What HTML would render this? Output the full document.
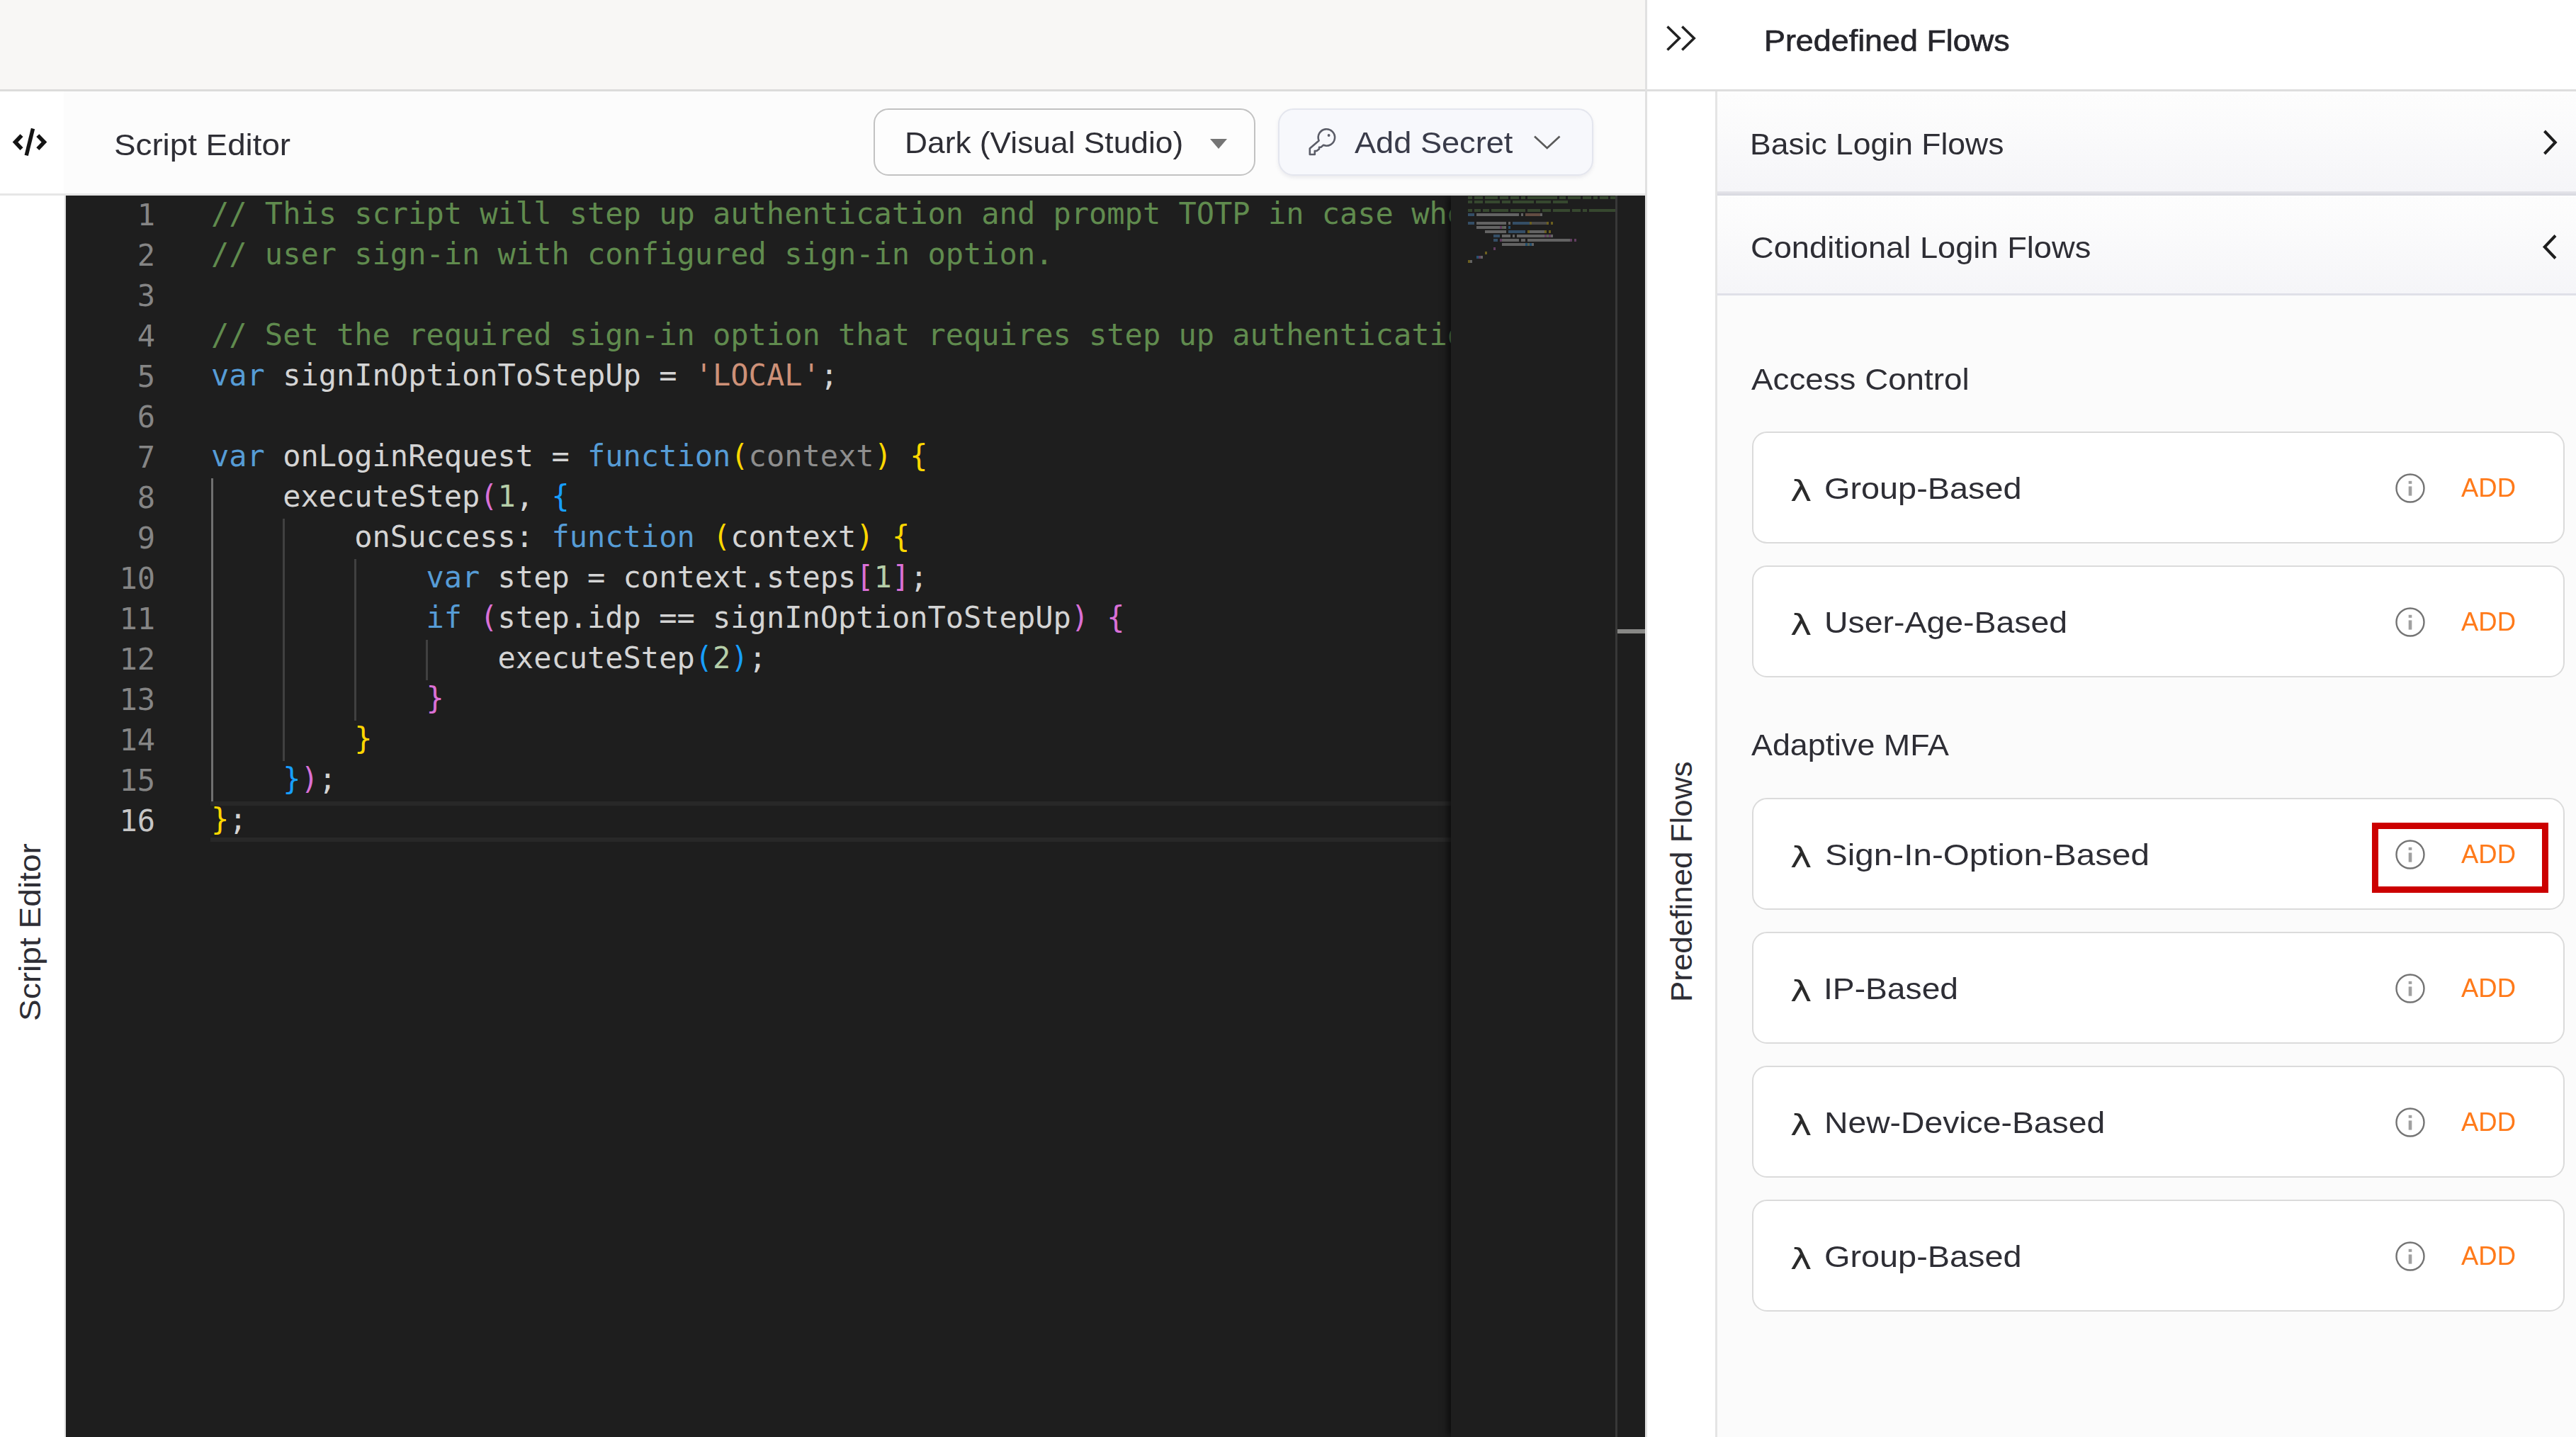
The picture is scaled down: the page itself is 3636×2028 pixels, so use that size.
<!DOCTYPE html>
<html lang="en">
<head>
<meta charset="utf-8">
<title>Script Editor - Predefined Flows</title>
<style>
*{box-sizing:border-box;margin:0;padding:0}
html,body{width:3636px;height:2028px;overflow:hidden;background:#fff}
body{position:relative;font-family:"Liberation Sans",sans-serif;font-size:42px;color:#2a2a2e;line-height:1}
.abs{position:absolute}
.t{position:absolute;white-space:nowrap;line-height:48px;height:48px}
/* left panel */
#ltop{left:0;top:0;width:2322px;height:126px;background:#f8f7f5}
#ltopb{left:0;top:126px;width:2322px;height:3px;background:#dcdcdb}
#lhead-l{left:0;top:129px;width:90px;height:145px;background:#fff}
#lhead-r{left:90px;top:129px;width:2232px;height:145px;background:#fcfcfc}
#lheadb{left:0;top:273px;width:2322px;height:3px;background:#e6e6e6}
#lside{left:0;top:276px;width:90px;height:1752px;background:#fff}
#lsideb{left:90px;top:276px;width:4px;height:1752px;background:linear-gradient(90deg,#fff,#bdbdbd)}
#editor{left:93px;top:276px;width:2229px;height:1752px;background:#1e1e1e;overflow:hidden;font-family:"DejaVu Sans Mono","Liberation Mono",monospace;font-size:42px;color:#d4d4d4}
#vsep{left:2322px;top:0;width:3px;height:2028px;background:#e1e1e1}
/* right panel */
#rhead{left:2325px;top:0;width:1311px;height:126px;background:#fff}
#rheadb{left:2325px;top:126px;width:1311px;height:3px;background:#dedede}
#rtab{left:2325px;top:129px;width:96px;height:1899px;background:#fff}
#rtabb{left:2421px;top:129px;width:3px;height:1899px;background:#e5e5e5}
#rcont{left:2424px;top:129px;width:1212px;height:1899px;background:#fbfbfb}

.hd{color:#2e2e35}
#dd{left:1233px;top:153px;width:539px;height:95px;border:2px solid #c2c2c2;border-radius:21px;background:#fdfdfd}
#btn{left:1804px;top:153px;width:445px;height:95px;border:2px solid #e4e6ee;border-radius:22px;background:#f7f8fc;box-shadow:0 3px 5px rgba(120,125,150,.13)}
#tri{left:1708px;top:196px;width:0;height:0;border-left:12.5px solid transparent;border-right:12.5px solid transparent;border-top:14px solid #757575}
.acc{left:0;width:1212px;background:linear-gradient(180deg,#fdfdfd 0%,#fafafb 45%,#f5f5f8 100%)}
.card{position:absolute;left:49px;width:1147px;height:158px;border:2px solid #dbdbdb;border-radius:21px;background:#fff}
.card .lam{position:absolute;left:52px;top:58px;font-size:40px;line-height:48px;transform-origin:0 50%;transform:scaleX(1.28);color:#2b2b2b;font-family:"DejaVu Sans","Liberation Sans",sans-serif}
.card .nm{position:absolute;left:101px;top:55px;line-height:48px;white-space:nowrap;color:#2e2e35}
.card .add{position:absolute;left:999px;top:57px;font-size:36px;line-height:42px;color:#ff7a1a;white-space:nowrap;transform-origin:0 50%;transform:scaleX(1.013)}
.card svg{position:absolute;left:903px;top:54px}
.sec{position:absolute;left:48px;line-height:48px;white-space:nowrap;color:#2e2e35}

#editor .ln{position:absolute;left:0;width:126px;margin-top:-0.7px;text-align:right;height:57px;line-height:57px;color:#858585;white-space:pre}
#editor .cl{position:absolute;left:205px;margin-top:-3px;height:57px;line-height:57px;white-space:pre;color:#d4d4d4}
#code{position:absolute;left:0;top:0;width:1955px;height:1752px;overflow:hidden}
.c{color:#608b4e}.k{color:#569cd6}.s{color:#ce9178}.n{color:#b5cea8}.b1{color:#ffd700}.b2{color:#da70d6}.b3{color:#179fff}.u{color:#8e8e8e}
.ig{position:absolute;width:3px;background:#404040}
#mm{position:absolute;left:1955px;top:0;width:325px;height:1752px;background:#1e1e1e;box-shadow:-7px 0 9px -2px rgba(0,0,0,.55)}
#mm i{position:absolute;height:4px;display:block;opacity:.5;filter:blur(.6px)}
</style>
</head>
<body>
<!-- LEFT -->
<div class="abs" id="ltop"></div>
<div class="abs" id="ltopb"></div>
<div class="abs" id="lhead-l"></div>
<div class="abs" id="lhead-r"></div>
<div class="abs" id="lheadb"></div>
<div class="abs" id="lside"></div>
<div class="abs" id="lsideb"></div>
<div class="abs" id="editor"><div id="code">
<div class="abs" style="left:204px;top:855px;width:1760px;height:57px;border-top:6px solid #282828;border-bottom:6px solid #282828"></div>
<div class="ln" style="top:0px">1</div>
<div class="cl" style="top:0px"><span class="c">// This script will step up authentication and prompt TOTP in case when the</span></div>
<div class="ln" style="top:57px">2</div>
<div class="cl" style="top:57px"><span class="c">// user sign-in with configured sign-in option.</span></div>
<div class="ln" style="top:114px">3</div>
<div class="cl" style="top:114px"></div>
<div class="ln" style="top:171px">4</div>
<div class="cl" style="top:171px"><span class="c">// Set the required sign-in option that requires step up authentication.</span></div>
<div class="ln" style="top:228px">5</div>
<div class="cl" style="top:228px"><span class="k">var</span> signInOptionToStepUp = <span class="s">&#x27;LOCAL&#x27;</span>;</div>
<div class="ln" style="top:285px">6</div>
<div class="cl" style="top:285px"></div>
<div class="ln" style="top:342px">7</div>
<div class="cl" style="top:342px"><span class="k">var</span> onLoginRequest = <span class="k">function</span><span class="b1">(</span><span class="u">context</span><span class="b1">)</span> <span class="b1">{</span></div>
<div class="ln" style="top:399px">8</div>
<div class="cl" style="top:399px">    executeStep<span class="b2">(</span><span class="n">1</span>, <span class="b3">{</span></div>
<div class="ln" style="top:456px">9</div>
<div class="cl" style="top:456px">        onSuccess: <span class="k">function</span> <span class="b1">(</span>context<span class="b1">)</span> <span class="b1">{</span></div>
<div class="ln" style="top:513px">10</div>
<div class="cl" style="top:513px">            <span class="k">var</span> step = context.steps<span class="b2">[</span><span class="n">1</span><span class="b2">]</span>;</div>
<div class="ln" style="top:570px">11</div>
<div class="cl" style="top:570px">            <span class="k">if</span> <span class="b2">(</span>step.idp == signInOptionToStepUp<span class="b2">)</span> <span class="b2">{</span></div>
<div class="ln" style="top:627px">12</div>
<div class="cl" style="top:627px">                executeStep<span class="b3">(</span><span class="n">2</span><span class="b3">)</span>;</div>
<div class="ln" style="top:684px">13</div>
<div class="cl" style="top:684px">            <span class="b2">}</span></div>
<div class="ln" style="top:741px">14</div>
<div class="cl" style="top:741px">        <span class="b1">}</span></div>
<div class="ln" style="top:798px">15</div>
<div class="cl" style="top:798px">    <span class="b3">}</span><span class="b2">)</span>;</div>
<div class="ln" style="top:855px;color:#c6c6c6">16</div>
<div class="cl" style="top:855px"><span class="b1">}</span>;</div>
<div class="ig" style="left:205.0px;top:399px;height:456px;background:#707070"></div>
<div class="ig" style="left:306.1px;top:456px;height:342px"></div>
<div class="ig" style="left:407.3px;top:513px;height:228px"></div>
<div class="ig" style="left:508.4px;top:627px;height:57px"></div>
</div>
<div id="mm">
<i style="left:24px;top:1px;width:6px;background:#4f7340"></i>
<i style="left:33px;top:1px;width:12px;background:#4f7340"></i>
<i style="left:48px;top:1px;width:18px;background:#4f7340"></i>
<i style="left:69px;top:1px;width:12px;background:#4f7340"></i>
<i style="left:84px;top:1px;width:12px;background:#4f7340"></i>
<i style="left:99px;top:1px;width:6px;background:#4f7340"></i>
<i style="left:108px;top:1px;width:42px;background:#4f7340"></i>
<i style="left:153px;top:1px;width:9px;background:#4f7340"></i>
<i style="left:165px;top:1px;width:18px;background:#4f7340"></i>
<i style="left:186px;top:1px;width:12px;background:#4f7340"></i>
<i style="left:201px;top:1px;width:6px;background:#4f7340"></i>
<i style="left:210px;top:1px;width:12px;background:#4f7340"></i>
<i style="left:225px;top:1px;width:7px;background:#4f7340"></i>
<i style="left:24px;top:7px;width:6px;background:#4f7340"></i>
<i style="left:33px;top:7px;width:12px;background:#4f7340"></i>
<i style="left:48px;top:7px;width:21px;background:#4f7340"></i>
<i style="left:72px;top:7px;width:12px;background:#4f7340"></i>
<i style="left:87px;top:7px;width:30px;background:#4f7340"></i>
<i style="left:120px;top:7px;width:21px;background:#4f7340"></i>
<i style="left:144px;top:7px;width:21px;background:#4f7340"></i>
<i style="left:24px;top:19px;width:6px;background:#4f7340"></i>
<i style="left:33px;top:19px;width:9px;background:#4f7340"></i>
<i style="left:45px;top:19px;width:9px;background:#4f7340"></i>
<i style="left:57px;top:19px;width:24px;background:#4f7340"></i>
<i style="left:84px;top:19px;width:21px;background:#4f7340"></i>
<i style="left:108px;top:19px;width:18px;background:#4f7340"></i>
<i style="left:129px;top:19px;width:12px;background:#4f7340"></i>
<i style="left:144px;top:19px;width:24px;background:#4f7340"></i>
<i style="left:171px;top:19px;width:12px;background:#4f7340"></i>
<i style="left:186px;top:19px;width:6px;background:#4f7340"></i>
<i style="left:195px;top:19px;width:37px;background:#4f7340"></i>
<i style="left:24px;top:25px;width:9px;background:#4a7fae"></i>
<i style="left:36px;top:25px;width:60px;background:#a8a8a8"></i>
<i style="left:99px;top:25px;width:3px;background:#a8a8a8"></i>
<i style="left:105px;top:25px;width:21px;background:#a67a66"></i>
<i style="left:126px;top:25px;width:3px;background:#a8a8a8"></i>
<i style="left:24px;top:37px;width:9px;background:#4a7fae"></i>
<i style="left:36px;top:37px;width:42px;background:#a8a8a8"></i>
<i style="left:81px;top:37px;width:3px;background:#a8a8a8"></i>
<i style="left:87px;top:37px;width:24px;background:#4a7fae"></i>
<i style="left:111px;top:37px;width:3px;background:#b8a020"></i>
<i style="left:114px;top:37px;width:21px;background:#777"></i>
<i style="left:135px;top:37px;width:3px;background:#b8a020"></i>
<i style="left:141px;top:37px;width:3px;background:#b8a020"></i>
<i style="left:36px;top:43px;width:33px;background:#a8a8a8"></i>
<i style="left:69px;top:43px;width:3px;background:#a45fa2"></i>
<i style="left:72px;top:43px;width:3px;background:#93a689"></i>
<i style="left:75px;top:43px;width:3px;background:#a8a8a8"></i>
<i style="left:81px;top:43px;width:3px;background:#2a82c4"></i>
<i style="left:48px;top:49px;width:30px;background:#a8a8a8"></i>
<i style="left:81px;top:49px;width:24px;background:#4a7fae"></i>
<i style="left:108px;top:49px;width:3px;background:#b8a020"></i>
<i style="left:111px;top:49px;width:21px;background:#a8a8a8"></i>
<i style="left:132px;top:49px;width:3px;background:#b8a020"></i>
<i style="left:138px;top:49px;width:3px;background:#b8a020"></i>
<i style="left:60px;top:55px;width:9px;background:#4a7fae"></i>
<i style="left:72px;top:55px;width:12px;background:#a8a8a8"></i>
<i style="left:87px;top:55px;width:3px;background:#a8a8a8"></i>
<i style="left:93px;top:55px;width:39px;background:#a8a8a8"></i>
<i style="left:132px;top:55px;width:3px;background:#a45fa2"></i>
<i style="left:135px;top:55px;width:3px;background:#93a689"></i>
<i style="left:138px;top:55px;width:3px;background:#a45fa2"></i>
<i style="left:141px;top:55px;width:3px;background:#a8a8a8"></i>
<i style="left:60px;top:61px;width:6px;background:#4a7fae"></i>
<i style="left:69px;top:61px;width:3px;background:#a45fa2"></i>
<i style="left:72px;top:61px;width:24px;background:#a8a8a8"></i>
<i style="left:99px;top:61px;width:6px;background:#a8a8a8"></i>
<i style="left:108px;top:61px;width:60px;background:#a8a8a8"></i>
<i style="left:168px;top:61px;width:3px;background:#a45fa2"></i>
<i style="left:174px;top:61px;width:3px;background:#a45fa2"></i>
<i style="left:72px;top:67px;width:33px;background:#a8a8a8"></i>
<i style="left:105px;top:67px;width:3px;background:#2a82c4"></i>
<i style="left:108px;top:67px;width:3px;background:#93a689"></i>
<i style="left:111px;top:67px;width:3px;background:#2a82c4"></i>
<i style="left:114px;top:67px;width:3px;background:#a8a8a8"></i>
<i style="left:60px;top:73px;width:3px;background:#a45fa2"></i>
<i style="left:48px;top:79px;width:3px;background:#b8a020"></i>
<i style="left:36px;top:85px;width:3px;background:#2a82c4"></i>
<i style="left:39px;top:85px;width:3px;background:#a45fa2"></i>
<i style="left:42px;top:85px;width:3px;background:#a8a8a8"></i>
<i style="left:24px;top:91px;width:3px;background:#b8a020"></i>
<i style="left:27px;top:91px;width:3px;background:#a8a8a8"></i>
</div>
<div class="abs" style="left:2187px;top:0;width:3px;height:1752px;background:#383838"></div>
<div class="abs" style="left:2190px;top:612px;width:39px;height:6px;background:#888886"></div></div>
<div class="abs" id="vsep"></div>

<svg class="abs" style="left:12px;top:176px" width="62" height="50" viewBox="12 176 62 50" fill="none" stroke="#141414" stroke-width="5.6" stroke-linecap="butt" stroke-linejoin="miter">
<path d="M30.55 191.1 L21.55 200.6 L30.55 210.1"/><path d="M46.5 181.5 L37.2 219.3" stroke-width="5.4"/><path d="M53.3 191.1 L62.4 200.6 L53.3 210.1"/></svg>
<div class="t hd" style="left:161px;top:181px;display:inline-block;transform-origin:0 50%;transform:scaleX(1.089)">Script Editor</div>
<div class="abs" id="dd"></div>
<div class="t hd" style="left:1276.5px;top:178px;display:inline-block;transform-origin:0 50%;transform:scaleX(1.055)">Dark (Visual Studio)</div>
<div class="abs" id="tri"></div>
<div class="abs" id="btn"></div>
<svg class="abs" style="left:1840px;top:176px" width="52" height="50" viewBox="1840 176 52 50" fill="none" stroke="#5b5d68" stroke-width="2.6" stroke-linejoin="round">
<path d="M1861.6 198.5 A11.7 11.7 0 1 1 1868 204.8 L1864.5 207.8 L1862 207.8 L1862 210.3 L1858.5 213 L1855.8 213 L1855.8 218 L1848.8 218 L1848.8 209.5 Z"/><circle cx="1875.6" cy="191" r="1.9" fill="#5b5d68" stroke="none"/></svg>
<div class="t hd" style="left:1911.6px;top:178px;color:#3a3c4a;display:inline-block;transform-origin:0 50%;transform:scaleX(1.075)">Add Secret</div>
<svg class="abs" style="left:2160px;top:186px" width="48" height="30" viewBox="2160 186 48 30" fill="none" stroke="#5a5a5a" stroke-width="2.7" stroke-linecap="butt" stroke-linejoin="miter"><path d="M2166 192.5 L2183.7 209 L2201.5 192.5"/></svg>
<div class="t hd" style="left:19.3px;top:1441px;transform-origin:0 0;transform:rotate(-90deg) scaleX(1.097)">Script Editor</div>

<!-- RIGHT -->
<div class="abs" id="rhead"></div>
<div class="abs" id="rheadb"></div>
<div class="abs" id="rtab"></div>
<div class="abs" id="rtabb"></div>
<div class="abs" id="rcont"><div class="abs acc" style="top:0;height:141px"></div>
<div class="abs" style="left:0;top:141px;width:1212px;height:6px;background:linear-gradient(180deg,#e6e6eb,#d6d7de)"></div>
<div class="abs acc" style="top:147px;height:138px"></div>
<div class="abs" style="left:0;top:285px;width:1212px;height:3px;background:#dfe0e8"></div>
<div class="sec" style="top:51.4px;left:45.5px;display:inline-block;transform-origin:0 50%;transform:scaleX(1.059)">Basic Login Flows</div>
<div class="sec" style="top:197px;left:46.7px;display:inline-block;transform-origin:0 50%;transform:scaleX(1.077)">Conditional Login Flows</div>
<svg class="abs" style="left:1160px;top:49px" width="32" height="46" viewBox="3584 178 32 46" fill="none" stroke="#1e1e1e" stroke-width="4" stroke-linejoin="miter"><path d="M3591.5 185 L3606.8 201 L3591.5 217"/></svg>
<svg class="abs" style="left:1160px;top:197px" width="32" height="46" viewBox="3584 326 32 46" fill="none" stroke="#1e1e1e" stroke-width="4" stroke-linejoin="miter"><path d="M3607 332.5 L3591.7 348.5 L3607 364.5"/></svg>
<div class="sec" style="top:382.8px;display:inline-block;transform-origin:0 50%;transform:scaleX(1.089)">Access Control</div>
<div class="sec" style="top:898.8px;display:inline-block;transform-origin:0 50%;transform:scaleX(1.067)">Adaptive MFA</div>
<div class="card" style="top:480px"><span class="lam">λ</span><span class="nm" style="left:100px;display:inline-block;transform-origin:0 50%;transform:scaleX(1.115)">Group-Based</span><svg width="48" height="48" viewBox="0 0 48 48" fill="none"><circle cx="24" cy="24" r="19.5" stroke="#747474" stroke-width="2.4"/><rect x="21.7" y="13.8" width="4.6" height="4" fill="#a0a0a0"/><rect x="21.7" y="21.4" width="4.6" height="13.2" fill="#a0a0a0"/></svg><span class="add">ADD</span></div>
<div class="card" style="top:669px"><span class="lam">λ</span><span class="nm" style="left:99.5px;display:inline-block;transform-origin:0 50%;transform:scaleX(1.105)">User-Age-Based</span><svg width="48" height="48" viewBox="0 0 48 48" fill="none"><circle cx="24" cy="24" r="19.5" stroke="#747474" stroke-width="2.4"/><rect x="21.7" y="13.8" width="4.6" height="4" fill="#a0a0a0"/><rect x="21.7" y="21.4" width="4.6" height="13.2" fill="#a0a0a0"/></svg><span class="add">ADD</span></div>
<div class="card" style="top:997px"><span class="lam">λ</span><span class="nm" style="display:inline-block;transform-origin:0 50%;transform:scaleX(1.134)">Sign-In-Option-Based</span><svg width="48" height="48" viewBox="0 0 48 48" fill="none"><circle cx="24" cy="24" r="19.5" stroke="#747474" stroke-width="2.4"/><rect x="21.7" y="13.8" width="4.6" height="4" fill="#a0a0a0"/><rect x="21.7" y="21.4" width="4.6" height="13.2" fill="#a0a0a0"/></svg><span class="add">ADD</span></div>
<div class="card" style="top:1186px"><span class="lam">λ</span><span class="nm" style="left:98.5px;display:inline-block;transform-origin:0 50%;transform:scaleX(1.10)">IP-Based</span><svg width="48" height="48" viewBox="0 0 48 48" fill="none"><circle cx="24" cy="24" r="19.5" stroke="#747474" stroke-width="2.4"/><rect x="21.7" y="13.8" width="4.6" height="4" fill="#a0a0a0"/><rect x="21.7" y="21.4" width="4.6" height="13.2" fill="#a0a0a0"/></svg><span class="add">ADD</span></div>
<div class="card" style="top:1375px"><span class="lam">λ</span><span class="nm" style="left:99.5px;display:inline-block;transform-origin:0 50%;transform:scaleX(1.102)">New-Device-Based</span><svg width="48" height="48" viewBox="0 0 48 48" fill="none"><circle cx="24" cy="24" r="19.5" stroke="#747474" stroke-width="2.4"/><rect x="21.7" y="13.8" width="4.6" height="4" fill="#a0a0a0"/><rect x="21.7" y="21.4" width="4.6" height="13.2" fill="#a0a0a0"/></svg><span class="add">ADD</span></div>
<div class="card" style="top:1564px"><span class="lam">λ</span><span class="nm" style="left:100px;display:inline-block;transform-origin:0 50%;transform:scaleX(1.115)">Group-Based</span><svg width="48" height="48" viewBox="0 0 48 48" fill="none"><circle cx="24" cy="24" r="19.5" stroke="#747474" stroke-width="2.4"/><rect x="21.7" y="13.8" width="4.6" height="4" fill="#a0a0a0"/><rect x="21.7" y="21.4" width="4.6" height="13.2" fill="#a0a0a0"/></svg><span class="add">ADD</span></div>
<div class="abs" style="left:924px;top:1032px;width:249px;height:99px;border:9px solid #cc0000"></div></div>

<svg class="abs" style="left:2346px;top:30px" width="54" height="48" viewBox="2346 30 54 48" fill="none" stroke="#222" stroke-width="3.6" stroke-linecap="butt" stroke-linejoin="miter">
<path d="M2353.5 37.5 L2370.4 54 L2353.5 70.5"/><path d="M2374.3 37.5 L2391.2 54 L2374.3 70.5"/></svg>
<div class="t" style="left:2490px;top:34.4px;color:#26262c;-webkit-text-stroke:0.7px #26262c;display:inline-block;transform-origin:0 50%;transform:scaleX(1.068)">Predefined Flows</div>
<div class="t hd" style="left:2350.4px;top:1413.5px;transform-origin:0 0;transform:rotate(-90deg) scaleX(1.046)">Predefined Flows</div>

</body>
</html>
